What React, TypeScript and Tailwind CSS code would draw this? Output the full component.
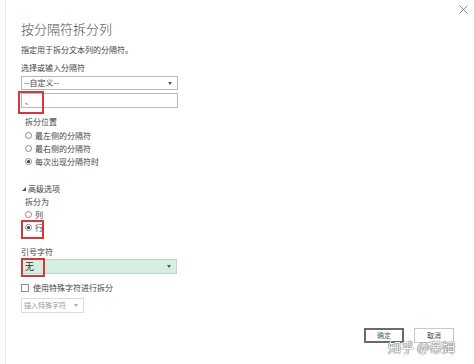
const font = { fontFamily: '"Noto Sans CJK SC", "Noto Sans", sans-serif' }

function Radio({ checked, label }: { checked?: boolean; label: string }) {
  return (
    <div className="flex h-[13px] items-center gap-[3px] pl-[4px]">
      <span className="flex h-[7px] w-[7px] items-center justify-center rounded-full border border-[#8a8a8a] bg-white">
        {checked && <span className="h-[3px] w-[3px] rounded-full bg-[#333]" />}
      </span>
      <span className="text-[8px] leading-none text-[#444]">{label}</span>
    </div>
  )
}

function Caret({ color = '#555' }: { color?: string }) {
  return (
    <svg width="4" height="3" viewBox="0 0 4 3">
      <path d="M0 0 L4 0 L2 3 Z" fill={color} />
    </svg>
  )
}

function RedBox({ className }: { className: string }) {
  return <div className={`pointer-events-none absolute border-2 border-[#d2383c] ${className}`} />
}

export default function App() {
  return (
    <div className="relative h-[364px] w-[474px] overflow-hidden bg-white" style={font}>
      <div className="ml-[5px] flex h-full flex-col border-l border-[#ececec] pl-[15px] pr-[20px] pt-[20px]">
        <div className="h-[17px] text-[13px] font-light leading-[17px] text-[#4a4a4a]">按分隔符拆分列</div>
        <div className="mt-[7px] h-[12px] text-[8px] leading-[12px] text-[#444]">指定用于拆分文本列的分隔符。</div>

        <div className="mt-[6px] h-[12px] text-[8px] leading-[12px] text-[#444]">选择或输入分隔符</div>
        <div className="mt-[2px] flex h-[14px] w-[157px] items-center justify-between border border-[#b9b9b9] pl-[2px] pr-[5px]">
          <span className="text-[8px] leading-none text-[#444]">--自定义--</span>
          <Caret />
        </div>
        <div className="relative mt-[3px] flex h-[15px] w-[157px] items-center border border-[#b9b9b9] pl-[3px]">
          <span className="text-[8px] leading-none text-[#444]">、</span>
          <RedBox className="-left-[4px] -top-[3px] h-[23px] w-[26px]" />
        </div>

        <div className="mt-[8px] h-[12px] pl-[4px] text-[8px] leading-[12px] text-[#444]">拆分位置</div>
        <div className="mt-[1px] flex flex-col">
          <Radio label="最左侧的分隔符" />
          <Radio label="最右侧的分隔符" />
          <Radio checked label="每次出现分隔符时" />
        </div>

        <div className="mt-[14px] flex h-[13px] items-center gap-[2px] pl-[1px]">
          <svg width="4" height="4" viewBox="0 0 4 4">
            <path d="M4 0 L4 4 L0 4 Z" fill="#555" />
          </svg>
          <span className="text-[8px] leading-none text-[#444]">高级选项</span>
        </div>
        <div className="flex h-[13px] items-center pl-[4px] text-[8px] leading-none text-[#444]">拆分为</div>
        <Radio label="列" />
        <div className="relative">
          <Radio checked label="行" />
          <RedBox className="left-0 -top-[1px] h-[19px] w-[23px]" />
        </div>

        <div className="mt-[12px] h-[12px] text-[8px] leading-[12px] text-[#444]">引号字符</div>
        <div className="relative mt-[1px] flex h-[15px] w-[156px] items-center justify-between border border-[#bfd9c8] bg-[#d6eedf] pl-[3px] pr-[5px]">
          <span className="text-[9px] leading-none text-[#333]">无</span>
          <Caret />
          <RedBox className="-left-[1px] -top-[2px] h-[19px] w-[24px]" />
        </div>

        <div className="mt-[7px] flex h-[14px] items-center gap-[4px]">
          <span className="h-[8px] w-[8px] border border-[#8a8a8a] bg-white" />
          <span className="text-[8px] leading-none text-[#444]">使用特殊字符进行拆分</span>
        </div>
        <div className="mt-[3px] flex h-[15px] w-[63px] items-center justify-between border border-[#dcdcdc] pl-[2px] pr-[5px]">
          <span className="text-[7px] leading-none text-[#999]">插入特殊字符</span>
          <Caret color="#aaa" />
        </div>

        <div className="mt-[15px] flex justify-end gap-[10px]">
          <button className="flex h-[15px] w-[40px] items-center justify-center border-2 border-[#6a6a6a] text-[7px] leading-none text-[#3c6e55]">
            确定
          </button>
          <button className="flex h-[15px] w-[40px] items-center justify-center border border-[#c8c8c8] text-[7px] leading-none text-[#444]">
            取消
          </button>
        </div>
      </div>

      <svg className="absolute left-[459px] top-[5px]" width="9" height="9" viewBox="0 0 9 9">
        <path d="M0.5 0.5 L8.5 8.5 M8.5 0.5 L0.5 8.5" stroke="#8a8a8a" strokeWidth="1" />
      </svg>

      {/* watermark sits over the dialog buttons, as in the source */}
      <div className="absolute left-[388px] top-[339px] text-[13px] leading-[15px] text-white [text-shadow:0_0_1px_#666,0_0_1px_#666,0_0_1px_#666]">
        知乎 @蒂姆
      </div>
    </div>
  )
}
